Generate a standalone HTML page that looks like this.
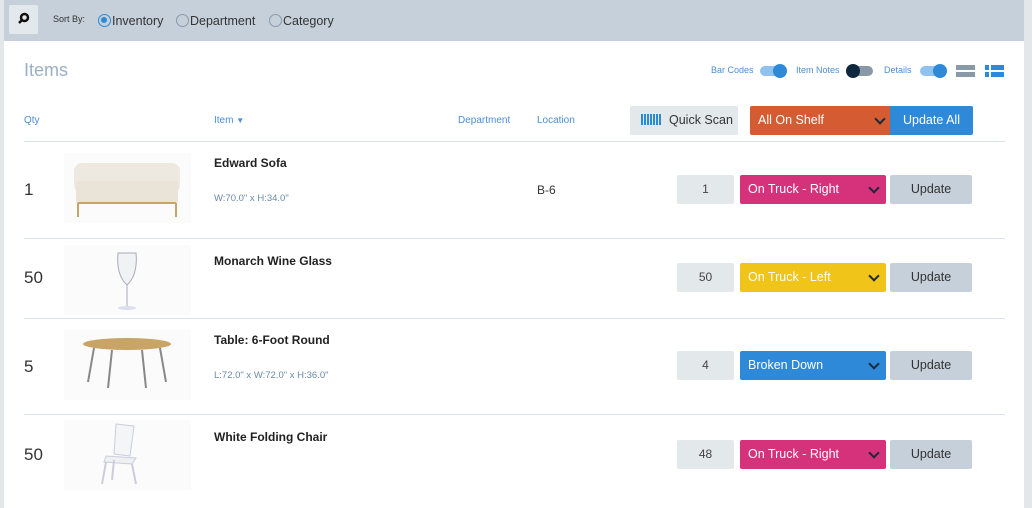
<!DOCTYPE html><html><head><style>
body{margin:0;width:1032px;height:508px;background:#e3e7ea;font-family:"Liberation Sans",sans-serif;position:relative;overflow:hidden}
.main{position:absolute;left:4px;top:0;width:1020px;height:508px;background:#fff}
.hdr{position:absolute;left:0;top:0;width:1020px;height:41px;background:#c5d0da}
.a{position:absolute;white-space:nowrap}
.srch{left:5px;top:5px;width:29px;height:29px;background:#e3e8ec;border-radius:2px}
.rad{display:inline-block;width:13px;height:13px;border:1px solid #8a9aa8;border-radius:50%;vertical-align:-2px;margin-right:1px;box-sizing:border-box;position:relative}
.rad.on{border-color:#2e89d9;border-width:1.5px}
.rad.on:after{content:"";position:absolute;left:2px;top:2px;width:6px;height:6px;border-radius:50%;background:#2e89d9}
.lbl{color:#4a8fd6;font-size:10px}
.tg{position:absolute;width:26px;height:10px;border-radius:5px}
.tg i{position:absolute;top:-2px;width:14px;height:14px;border-radius:50%}
.line{position:absolute;left:20px;width:981px;height:1px;background:#dbe1e6}
.qty{position:absolute;left:20px;font-size:17px;color:#333}
.nm{position:absolute;left:210px;font-size:12px;font-weight:bold;color:#222}
.dim{position:absolute;left:210px;font-size:9.5px;color:#6a8aa8}
.num{position:absolute;left:673px;width:57px;height:29px;background:#e3e8eb;border-radius:2px;text-align:center;line-height:29px;font-size:12px;color:#444}
.sel{position:absolute;left:736px;width:146px;height:29px;border-radius:2px;color:#fff;font-size:12.5px;line-height:29px;padding-left:8px;box-sizing:border-box}
.sel:after{content:"";position:absolute;right:8px;top:9px;width:6px;height:6px;border-right:2.5px solid #1a2a3a;border-bottom:2.5px solid #1a2a3a;transform:rotate(45deg)}
.up{position:absolute;left:886px;width:82px;height:29px;background:#c5d0da;border-radius:2px;text-align:center;line-height:29px;font-size:12.5px;color:#333}
.img{position:absolute;left:60px;width:127px;height:70px;background:#fbfbfb}
</style></head><body>
<div class="main">
<div class="hdr">
<div class="a srch"><svg width="29" height="29"><circle cx="15.5" cy="12.5" r="3.5" fill="none" stroke="#111" stroke-width="2.5"/><line x1="13" y1="15" x2="10" y2="18" stroke="#111" stroke-width="2.5"/></svg></div>
<div class="a" style="left:49px;top:14px;font-size:9px;color:#333">Sort By:</div>
<div class="a" style="left:94px;top:14px;font-size:12.5px;color:#333"><span class="rad on"></span>Inventory</div>
<div class="a" style="left:172px;top:14px;font-size:12.5px;color:#333"><span class="rad"></span>Department</div>
<div class="a" style="left:265px;top:14px;font-size:12.5px;color:#333"><span class="rad"></span>Category</div>
</div>
<div class="a" style="left:20px;top:60px;font-size:18px;color:#9bb0c4">Items</div>
<div class="a lbl" style="left:707px;top:65px;font-size:9px">Bar Codes</div>
<div class="tg" style="left:756px;top:66px;background:#8fc2ee"><i style="left:13px;background:#2e89d9"></i></div>
<div class="a lbl" style="left:792px;top:65px;font-size:9px">Item Notes</div>
<div class="tg" style="left:843px;top:66px;background:#8a99a8"><i style="left:-1px;background:#0f2840"></i></div>
<div class="a lbl" style="left:880px;top:65px;font-size:9px">Details</div>
<div class="tg" style="left:916px;top:66px;background:#8fc2ee"><i style="left:13px;background:#2e89d9"></i></div>
<div class="a" style="left:952px;top:65px;width:19px;height:5px;background:#8a99a8"></div>
<div class="a" style="left:952px;top:72px;width:19px;height:5px;background:#8a99a8"></div>
<div class="a" style="left:981px;top:65px;width:4px;height:5px;background:#2e89d9"></div><div class="a" style="left:987px;top:65px;width:13px;height:5px;background:#2e89d9"></div>
<div class="a" style="left:981px;top:72px;width:4px;height:5px;background:#2e89d9"></div><div class="a" style="left:987px;top:72px;width:13px;height:5px;background:#2e89d9"></div>
<div class="a lbl" style="left:20px;top:115px">Qty</div>
<div class="a lbl" style="left:210px;top:115px">Item <span style="font-size:8px">▼</span></div>
<div class="a lbl" style="left:454px;top:115px">Department</div>
<div class="a lbl" style="left:533px;top:115px">Location</div>
<div class="a" style="left:626px;top:106px;width:108px;height:29px;background:#e3e8eb;border-radius:2px;font-size:12.5px;line-height:29px;color:#333"><span style="display:inline-block;margin:0 8px 0 11px;width:20px;height:11px;vertical-align:-1px;background:repeating-linear-gradient(90deg,#2e89d9 0 2px,transparent 2px 3px)"></span>Quick Scan</div>
<div class="sel" style="left:746px;top:106px;width:142px;height:29px;background:#d45b32">All On Shelf</div>
<div class="a" style="left:886px;top:106px;width:83px;height:29px;background:#2e89d9;color:#fff;font-size:12.5px;line-height:29px;text-align:center;border-radius:0 2px 2px 0">Update All</div>
<div class="line" style="top:141px"></div>
<div class="line" style="top:238px"></div>
<div class="line" style="top:318px"></div>
<div class="line" style="top:414px"></div>

<div class="qty" style="top:180px">1</div>
<div class="img" style="top:153px"><svg width="127" height="70"><rect x="10" y="10" width="106" height="30" rx="8" fill="#eee9e0"/><rect x="12" y="28" width="102" height="22" fill="#e9e3d8"/><line x1="14" y1="50" x2="14" y2="64" stroke="#c9a46a" stroke-width="2"/><line x1="112" y1="50" x2="112" y2="64" stroke="#c9a46a" stroke-width="2"/><line x1="14" y1="50" x2="112" y2="50" stroke="#c9a46a" stroke-width="2"/></svg></div>
<div class="nm" style="top:156px">Edward Sofa</div>
<div class="dim" style="top:193px">W:70.0" x H:34.0"</div>
<div class="a" style="left:533px;top:183px;font-size:12px;color:#333">B-6</div>
<div class="num" style="top:175px">1</div>
<div class="sel" style="top:175px;background:#d6317b">On Truck - Right</div>
<div class="up" style="top:175px">Update</div>

<div class="qty" style="top:268px">50</div>
<div class="img" style="top:245px"><svg width="127" height="70"><path d="M54 8 Q52 30 63 40 Q74 30 72 8 Z" fill="#f0f2f3" stroke="#aab" stroke-width="1"/><line x1="63" y1="40" x2="63" y2="62" stroke="#aab"/><ellipse cx="63" cy="63" rx="9" ry="2" fill="#dde"/></svg></div>
<div class="nm" style="top:254px">Monarch Wine Glass</div>
<div class="num" style="top:263px">50</div>
<div class="sel" style="top:263px;background:#f0c419">On Truck - Left</div>
<div class="up" style="top:263px">Update</div>

<div class="qty" style="top:357px">5</div>
<div class="img" style="top:330px"><svg width="127" height="70"><ellipse cx="63" cy="14" rx="44" ry="6" fill="#c9a467"/><path d="M30 18 L24 52 M96 18 L102 52 M48 20 L44 58 M78 20 L82 58" stroke="#888" stroke-width="2" fill="none"/></svg></div>
<div class="nm" style="top:333px">Table: 6-Foot Round</div>
<div class="dim" style="top:370px">L:72.0" x W:72.0" x H:36.0"</div>
<div class="num" style="top:351px">4</div>
<div class="sel" style="top:351px;background:#2e89d9">Broken Down</div>
<div class="up" style="top:351px">Update</div>

<div class="qty" style="top:445px">50</div>
<div class="img" style="top:420px"><svg width="127" height="70"><path d="M52 4 L70 6 L66 36 L50 34 Z" fill="#f4f5f6" stroke="#ccd" /><path d="M42 36 L72 38 L68 44 L40 42 Z" fill="#eef0f2" stroke="#ccd"/><path d="M42 42 L38 64 M68 44 L72 64 M50 40 L48 60" stroke="#ccd" stroke-width="2"/></svg></div>
<div class="nm" style="top:430px">White Folding Chair</div>
<div class="num" style="top:440px">48</div>
<div class="sel" style="top:440px;background:#d6317b">On Truck - Right</div>
<div class="up" style="top:440px">Update</div>
</div>
</body></html>
